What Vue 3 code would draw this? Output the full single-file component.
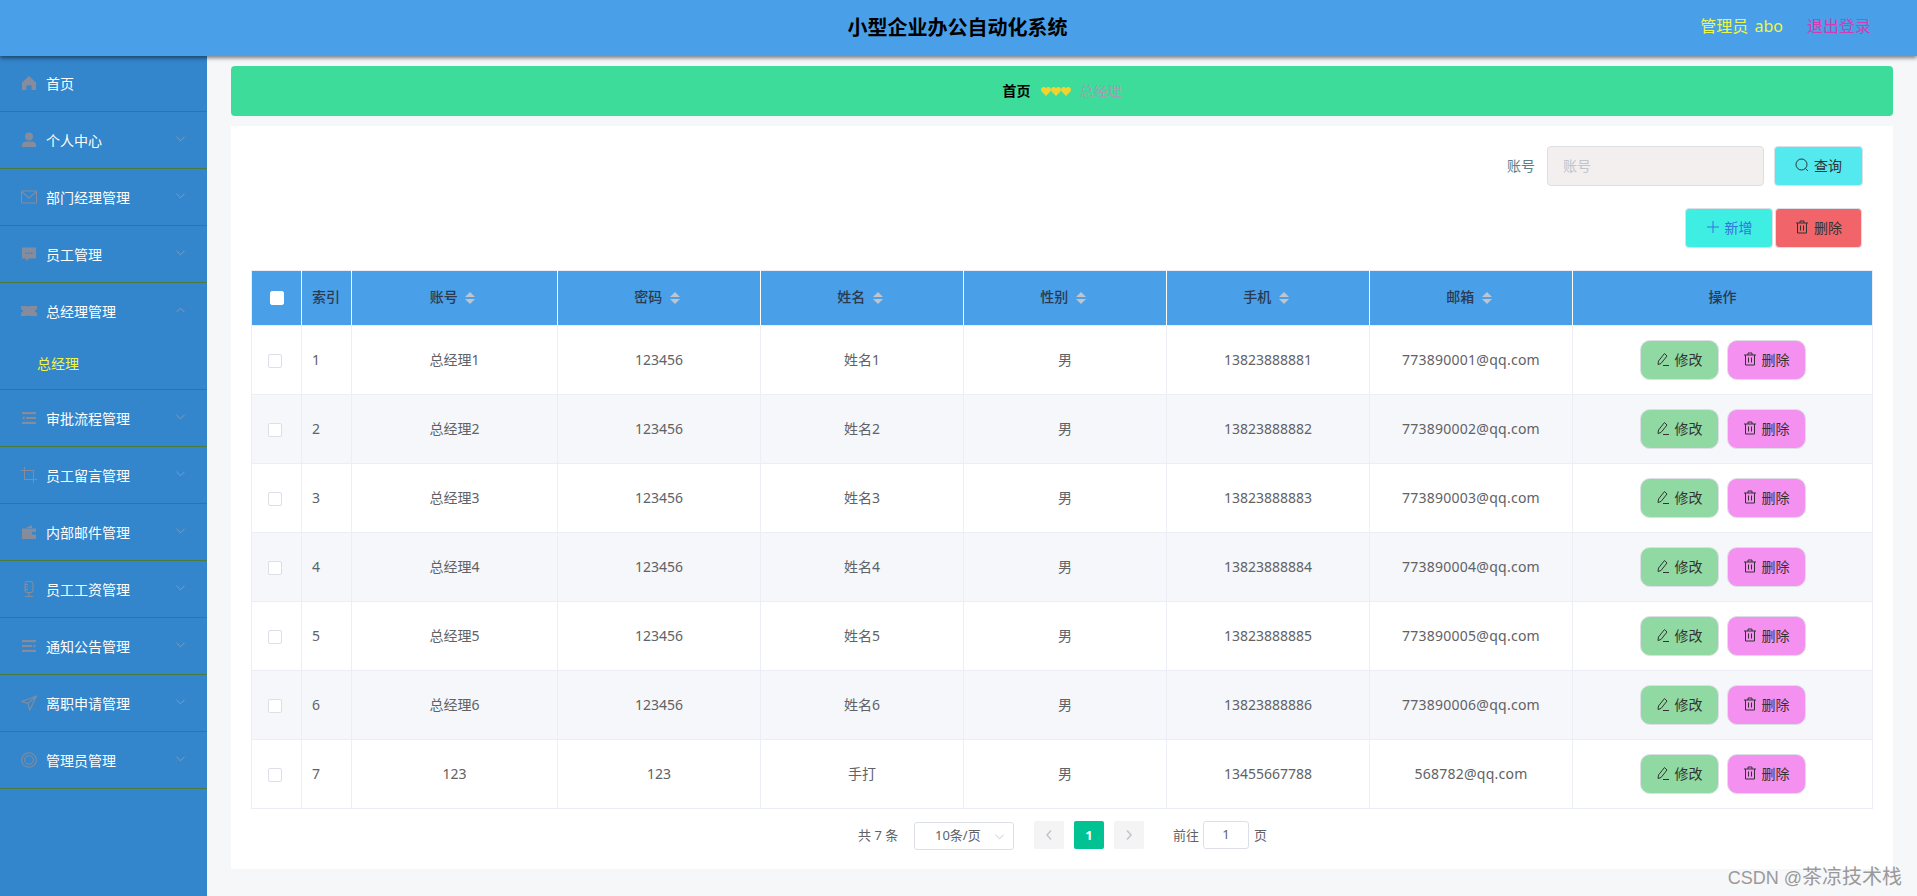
<script setup>
const menus = [
  { name: '首页', icon: 'home', leaf: true },
  { name: '个人中心', icon: 'user' },
  { name: '部门经理管理', icon: 'mail' },
  { name: '员工管理', icon: 'chat' },
  { name: '总经理管理', icon: 'ticket', open: true, sub: '总经理' },
  { name: '审批流程管理', icon: 'indent' },
  { name: '员工留言管理', icon: 'crop' },
  { name: '内部邮件管理', icon: 'wallet' },
  { name: '员工工资管理', icon: 'mic' },
  { name: '通知公告管理', icon: 'outdent' },
  { name: '离职申请管理', icon: 'send' },
  { name: '管理员管理', icon: 'help' },
]

const columns = ['账号', '密码', '姓名', '性别', '手机', '邮箱']

const rows = [
  { id: 1, account: '总经理1', pwd: '123456', name: '姓名1', phone: '13823888881', mail: '773890001@qq.com' },
  { id: 2, account: '总经理2', pwd: '123456', name: '姓名2', phone: '13823888882', mail: '773890002@qq.com' },
  { id: 3, account: '总经理3', pwd: '123456', name: '姓名3', phone: '13823888883', mail: '773890003@qq.com' },
  { id: 4, account: '总经理4', pwd: '123456', name: '姓名4', phone: '13823888884', mail: '773890004@qq.com' },
  { id: 5, account: '总经理5', pwd: '123456', name: '姓名5', phone: '13823888885', mail: '773890005@qq.com' },
  { id: 6, account: '总经理6', pwd: '123456', name: '姓名6', phone: '13823888886', mail: '773890006@qq.com' },
  { id: 7, account: '123', pwd: '123', name: '手打', phone: '13455667788', mail: '568782@qq.com' },
]
</script>

<template>
  <div class="page">
    <header class="topbar">
      <div class="title">小型企业办公自动化系统</div>
      <div class="user-info">
        <span class="admin">管理员 abo</span>
        <span class="logout">退出登录</span>
      </div>
    </header>

    <div class="body">
      <aside class="sidebar">
        <div v-for="m in menus" :key="m.name" class="menu-item">
          <div class="menu-title">
            <svg class="menu-icon" viewBox="0 0 16 16">
              <path v-if="m.icon === 'home'" class="fill" d="M8 1 1 7.5V15h4.5v-4.5h5V15H15V7.5z" />
              <g v-if="m.icon === 'user'" class="fill">
                <circle cx="8" cy="4.5" r="4" />
                <path d="M1 15v-2c0-2 2-3.5 4-3.5h6c2 0 4 1.500 4 3.500v2z" />
              </g>
              <g v-if="m.icon === 'mail'" class="line">
                <rect x="0.500" y="2" width="15" height="12" rx="1" />
                <path d="m1 3 7 6 7-6" />
              </g>
              <path v-if="m.icon === 'chat'" class="fill" fill-rule="evenodd" d="M1 1.500h14v11H8l-3 2.500v-2.500H1zM4.500 6.500v1.500H6V6.500zm2.750 0v1.500h1.500V6.500zm2.750 0v1.500h1.500V6.500z" />
              <path v-if="m.icon === 'ticket'" class="fill" d="M0 3h6l1 1 1-1h8v3.500c-1.500 0-2 .7-2 1.500s.5 1.500 2 1.500V13H8l-1-1-1 1H0V9.500c1.500 0 2-.7 2-1.500s-.5-1.500-2-1.500z" />
              <g v-if="m.icon === 'indent'" class="fill">
                <rect x="1" y="2" width="14" height="2.200" />
                <rect x="5" y="6.900" width="10" height="2.200" />
                <rect x="1" y="11.800" width="14" height="2.200" />
                <path d="M1 8 3.500 6v4z" />
              </g>
              <path v-if="m.icon === 'crop'" class="line" d="M3.500 0v12.500H16M0 3.500h12.500V16" />
              <g v-if="m.icon === 'wallet'" class="fill">
                <path d="M5 4 10.500 1 11.500 4z" />
                <path fill-rule="evenodd" d="M1 4.500h14V8h-4v2.500h4V15H1z" />
              </g>
              <g v-if="m.icon === 'mic'" class="line">
                <rect x="4" y="0.500" width="8" height="11" rx="2.500" />
                <path d="M4 3.500h3M4 6h3M4 8.500h3M8 11.500v4M4 15.500h8" />
              </g>
              <g v-if="m.icon === 'outdent'" class="fill">
                <rect x="1" y="2" width="14" height="2.200" />
                <rect x="1" y="6.900" width="10" height="2.200" />
                <rect x="1" y="11.800" width="14" height="2.200" />
                <path d="M15 8 12.500 6v4z" />
              </g>
              <path v-if="m.icon === 'send'" class="line" d="M15.500 1 .8 6.500l6 2 2 6.500zM15.500 1 6.800 8.500" />
              <g v-if="m.icon === 'help'" class="line">
                <circle cx="8" cy="8" r="7.300" />
                <circle cx="8" cy="8" r="4.300" />
              </g>
            </svg>
            <span>{{ m.name }}</span>
            <svg v-if="!m.leaf" class="chevron" :class="{ up: m.open }" viewBox="0 0 10 6">
              <path d="M.5.500 5 5 9.500.5" />
            </svg>
          </div>
          <div v-if="m.sub" class="sub-item">{{ m.sub }}</div>
        </div>
      </aside>

      <main class="main">
        <div class="breadcrumb">
          <span class="crumb-home">首页</span>
          <span class="hearts">
            <svg v-for="n in 3" :key="n" viewBox="0 0 10 9">
              <path d="M5 9 .7 4.600C-.8 2.800.4 0 2.700 0 3.800 0 4.600.6 5 1.300 5.400.6 6.200 0 7.300 0c2.300 0 3.500 2.800 2 4.600z" />
            </svg>
          </span>
          <span class="crumb-current">总经理</span>
        </div>

        <section class="panel">
          <div class="search-row">
            <label class="search-label">账号</label>
            <input class="search-input" placeholder="账号" />
            <button class="btn btn-search">
              <svg class="btn-icon" viewBox="0 0 14 14">
                <circle cx="6.500" cy="6.500" r="5.500" />
                <path d="m10.500 10.500 2.500 2.500" />
              </svg>
              查询
            </button>
          </div>

          <div class="action-row">
            <button class="btn btn-add">
              <svg class="btn-icon" viewBox="0 0 14 14"><path d="M7 1v12M1 7h12" /></svg>
              新增
            </button>
            <button class="btn btn-remove">
              <svg class="btn-icon" viewBox="0 0 14 14">
                <path d="M1 3h12M5 3V1h4v2M2.500 3v10h9V3M5.500 5.500v5M8.500 5.500v5" />
              </svg>
              删除
            </button>
          </div>

          <table class="data-table">
            <colgroup>
              <col style="width: 50px" />
              <col style="width: 50px" />
              <col style="width: 206px" />
              <col v-for="n in 5" :key="n" style="width: 203px" />
              <col style="width: 300px" />
            </colgroup>
            <thead>
              <tr>
                <th class="check-head"><span class="checkbox white"></span></th>
                <th class="index-cell">索引</th>
                <th v-for="c in columns" :key="c">
                  {{ c }}
                  <span class="sort">
                    <i class="caret-up"></i>
                    <i class="caret-down"></i>
                  </span>
                </th>
                <th>操作</th>
              </tr>
            </thead>
            <tbody>
              <tr v-for="r in rows" :key="r.id">
                <td class="check-cell"><span class="checkbox"></span></td>
                <td class="index-cell">{{ r.id }}</td>
                <td>{{ r.account }}</td>
                <td>{{ r.pwd }}</td>
                <td>{{ r.name }}</td>
                <td>男</td>
                <td>{{ r.phone }}</td>
                <td class="mail-cell">{{ r.mail }}</td>
                <td class="op-cell">
                  <div class="ops">
                    <button class="btn btn-edit">
                      <svg class="btn-icon" viewBox="0 0 14 14">
                        <path d="M8.500 1.500 11 4 5 11.500l-3 1 .5-3.500zM7 13.500h6" />
                      </svg>
                      修改
                    </button>
                    <button class="btn btn-del">
                      <svg class="btn-icon" viewBox="0 0 14 14">
                        <path d="M1 3h12M5 3V1h4v2M2.500 3v10h9V3M5.500 5.500v5M8.500 5.500v5" />
                      </svg>
                      删除
                    </button>
                  </div>
                </td>
              </tr>
            </tbody>
          </table>

          <div class="pager">
            <span class="total">共 7 条</span>
            <div class="size-select">
              <span>10条/页</span>
              <svg viewBox="0 0 10 6"><path d="M.5.500 5 5 9.500.5" /></svg>
            </div>
            <div class="page-btn prev">
              <svg viewBox="0 0 6 10"><path d="M5 .5 1 5l4 4.500" /></svg>
            </div>
            <div class="page-btn current">1</div>
            <div class="page-btn">
              <svg viewBox="0 0 6 10"><path d="m1 .5 4 4.500-4 4.500" /></svg>
            </div>
            <span class="jump">前往</span>
            <div class="jump-input">1</div>
            <span class="jump-unit">页</span>
          </div>
        </section>
      </main>
    </div>

    <div class="watermark">CSDN @<span class="watermark-cn">茶凉技术栈</span></div>
  </div>
</template>

<style>
html,
body {
  margin: 0;
  background: #f6f7f9;
}
</style>

<style scoped>
.page {
  position: relative;
  height: 896px;
  overflow: hidden;
  display: flex;
  flex-direction: column;
  font-family: "Noto Sans", "Noto Sans CJK SC", sans-serif;
  font-size: 14px;
  color: #606266;
}

.topbar {
  position: relative;
  z-index: 2;
  height: 56px;
  flex-shrink: 0;
  background: #499fe8;
  box-shadow: 0 2px 4px rgba(0, 0, 0, 0.5);
  display: flex;
  align-items: center;
  justify-content: center;
}

.title {
  font-size: 20px;
  font-weight: 700;
  color: #000;
  padding-bottom: 4px;
  margin-left: -2px;
}

.user-info {
  position: absolute;
  right: 46px;
  top: 0;
  line-height: 52px;
  font-size: 16px;
  display: flex;
  gap: 24px;
}

.admin {
  color: #eef54a;
  word-spacing: 2px;
}

.logout {
  color: #d63bb3;
}

.body {
  flex: 1;
  display: flex;
  min-height: 0;
}

.sidebar {
  width: 207px;
  flex-shrink: 0;
  margin-top: -1px;
  background: #3385cc;
  color: #fff;
}

.menu-item {
  border-bottom: 1px solid #4a7a3c;
}

.menu-title {
  position: relative;
  height: 56px;
  display: flex;
  align-items: center;
  padding-left: 22px;
  gap: 8px;
}

.menu-icon {
  width: 16px;
  height: 16px;
  margin-left: -1px;
  margin-right: 1px;
  flex-shrink: 0;
}

.menu-icon .fill {
  fill: #868c9b;
}

.menu-icon .line {
  fill: none;
  stroke: #868c9b;
  stroke-width: 1.100;
}

.chevron {
  position: absolute;
  right: 22px;
  top: 24px;
  width: 9px;
  height: 6px;
  fill: none;
  stroke: #8aa0b8;
}

.chevron.up {
  transform: rotate(180deg);
}

.sub-item {
  height: 50px;
  line-height: 50px;
  padding-left: 37px;
  color: #f0f54a;
}

.main {
  flex: 1;
  min-width: 0;
  padding: 10px 24px 0;
  box-sizing: border-box;
}

.breadcrumb {
  height: 50px;
  box-sizing: border-box;
  padding-bottom: 2px;
  border-radius: 4px;
  background: #3edc9a;
  display: flex;
  align-items: center;
  justify-content: center;
}

.crumb-home {
  font-weight: 600;
  color: #000;
}

.hearts {
  display: flex;
  margin: 2px 9px 0 10px;
}

.hearts svg {
  width: 10px;
  height: 9px;
  fill: #f4d32f;
}

.crumb-current {
  color: #a29db4;
}

.panel {
  margin-top: 10px;
  height: 743px;
  box-sizing: border-box;
  background: #fff;
  padding: 20px 21px 0 20px;
}

.search-row,
.action-row {
  display: flex;
  justify-content: flex-end;
  align-items: center;
  padding-right: 9px;
  height: 40px;
}

.action-row {
  margin-top: 22px;
  padding-right: 10px;
  gap: 2px;
}

.search-label {
  color: #5c7f86;
  margin-right: 12px;
  padding-bottom: 2px;
}

.search-input {
  width: 217px;
  height: 40px;
  box-sizing: border-box;
  border: 1px solid #dcdfe6;
  border-radius: 4px;
  background: #f3efef;
  padding: 0 15px 2px;
  margin-right: 10px;
  font: inherit;
  outline: none;
}

.search-input::placeholder {
  color: #c0c4cc;
}

.btn {
  display: inline-flex;
  align-items: center;
  justify-content: center;
  gap: 5px;
  box-sizing: border-box;
  padding: 0 0 2px;
  font: inherit;
  border: 1px solid #dcdfe6;
  border-radius: 4px;
  color: #333;
}

.btn-icon {
  width: 14px;
  height: 14px;
  fill: none;
  stroke: currentColor;
  stroke-width: 1;
}

.btn-search,
.btn-add,
.btn-remove {
  height: 40px;
}

.btn-search {
  width: 89px;
  background: #54e9ee;
}

.btn-add {
  width: 88px;
  background: #3eeee3;
  color: #3a6fe0;
}

.btn-remove {
  width: 87px;
  background: #f16469;
}

.data-table {
  margin-top: 22px;
  width: 1621px;
  table-layout: fixed;
  border-collapse: collapse;
}

.data-table th {
  height: 50px;
  padding: 0 0 4px;
  background: #499fe8;
  color: #2a3a50;
  font-weight: 500;
  text-align: center;
  border: 1px solid #fff;
  border-top-color: #ebeef5;
  border-bottom-color: #ebeef5;
}

.data-table th:first-child {
  border-left-color: #ebeef5;
}

.data-table th:last-child {
  border-right-color: #ebeef5;
}

.data-table td {
  height: 66px;
  padding: 0 0 2px;
  text-align: center;
  border: 1px solid #ebeef5;
}

.data-table td.op-cell {
  height: 68px;
  padding: 0;
}

.data-table td.mail-cell {
  letter-spacing: 0.250px;
}

.data-table tbody tr:nth-child(even) td {
  background: #f5f7fa;
}

.data-table .index-cell {
  text-align: left;
  padding-left: 10px;
}

.checkbox {
  display: inline-block;
  vertical-align: middle;
  width: 14px;
  height: 14px;
  box-sizing: border-box;
  border: 1px solid #dcdfe6;
  border-radius: 2px;
  background: #fff;
}

.check-cell .checkbox {
  margin-right: 4px;
}

.check-head .checkbox {
  border-color: #fff;
}

.sort {
  display: inline-flex;
  flex-direction: column;
  gap: 2px;
  margin-left: 4px;
  margin-right: 4px;
  vertical-align: middle;
}

.sort i {
  display: block;
  width: 0;
  height: 0;
  border-left: 5px solid transparent;
  border-right: 5px solid transparent;
}

.caret-up {
  border-bottom: 5px solid #c0c4cc;
}

.caret-down {
  border-top: 5px solid #c0c4cc;
}

.ops {
  display: flex;
  justify-content: center;
  gap: 8px;
}

.btn-edit,
.btn-del {
  width: 79px;
  height: 40px;
  border-radius: 10px;
}

.btn-edit {
  background: #90d9a2;
}

.btn-del {
  background: #f490ef;
}

.pager {
  margin-top: 12px;
  height: 28px;
  display: flex;
  align-items: center;
  font-size: 13px;
  line-height: 24px;
  padding-left: 607px;
}

.total {
  width: 56px;
}

.size-select {
  position: relative;
  width: 100px;
  height: 28px;
  box-sizing: border-box;
  margin-top: 2px;
  border: 1px solid #dcdfe6;
  border-radius: 3px;
  line-height: 24px;
  padding-left: 20px;
  margin-right: 20px;
}

.size-select svg {
  position: absolute;
  right: 9px;
  top: 11px;
  width: 9px;
  height: 6px;
  fill: none;
  stroke: #c0c4cc;
}

.page-btn {
  width: 30px;
  height: 28px;
  border-radius: 2px;
  margin-right: 10px;
  background: #f4f4f5;
  display: flex;
  align-items: center;
  justify-content: center;
}

.page-btn svg {
  width: 6px;
  height: 10px;
  fill: none;
  stroke: #c0c4cc;
  stroke-width: 1.500;
}

.page-btn.current {
  background: #00c292;
  color: #fff;
  font-weight: 700;
}

.jump {
  margin-left: 19px;
}

.jump-input {
  width: 46px;
  height: 28px;
  box-sizing: border-box;
  margin: 0 5px 0 4px;
  border: 1px solid #dcdfe6;
  border-radius: 3px;
  text-align: center;
  line-height: 24px;
}

.watermark {
  position: absolute;
  right: 15px;
  top: 864px;
  font-size: 18px;
  line-height: 26px;
  color: #9a9a9a;
  font-family: "Liberation Sans", "Noto Sans CJK SC", sans-serif;
}

.watermark-cn {
  font-size: 20px;
}
</style>
